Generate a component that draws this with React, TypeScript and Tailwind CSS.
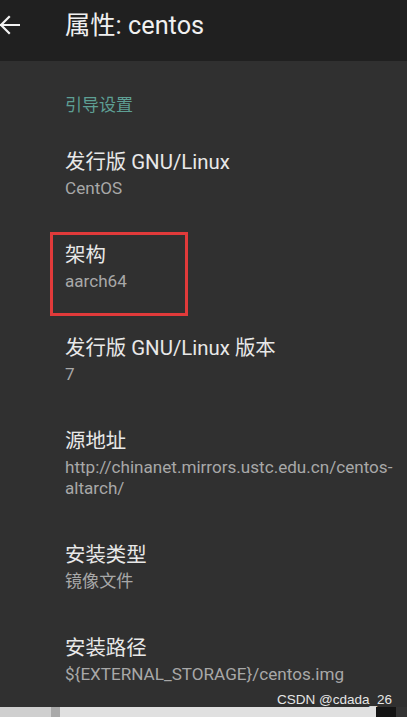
import React from "react";

const items: { title: string; lines: string[]; boxed?: boolean }[] = [
  { title: "发行版 GNU/Linux", lines: ["CentOS"] },
  { title: "架构", lines: ["aarch64"], boxed: true },
  { title: "发行版 GNU/Linux 版本", lines: ["7"] },
  { title: "源地址", lines: ["http://chinanet.mirrors.ustc.edu.cn/centos-", "altarch/"] },
  { title: "安装类型", lines: ["镜像文件"] },
  { title: "安装路径", lines: ["${EXTERNAL_STORAGE}/centos.img"] },
];

export default function App() {
  return (
    <div
      className="relative flex h-[717px] w-[407px] flex-col overflow-hidden bg-[#303030]"
      style={{ fontFamily: 'Roboto, "Noto Sans CJK SC", sans-serif' }}
    >
      <div className="flex h-[61px] shrink-0 items-start bg-[#202020]">
        <svg width="20" height="20" viewBox="0 0 20 20" className="mt-[15px] shrink-0">
          <path d="M1 10 H19 M1 10 L9 2 M1 10 L9 18" stroke="#f2f2f2" strokeWidth="2.2" fill="none" strokeLinecap="square" />
        </svg>
        <div className="ml-[45px] mt-[11px] text-[25.3px] leading-[30px] text-[#f0f0f0]">属性: centos</div>
      </div>
      <div className="flex-1 pl-[65px]">
        <div className="mt-[32px] mb-[10px] text-[17px] leading-[24px] text-[#5e9f94]">引导设置</div>
        {items.map((it) => (
          <div key={it.title} className="relative py-[21px]">
            <div className="whitespace-nowrap text-[20.4px] leading-[28px] text-[#e8e8e8]">{it.title}</div>
            <div className="mt-[2px]">
              {it.lines.map((l) => (
                <div key={l} className="whitespace-nowrap text-[17.1px] leading-[21px] text-[#a8a8a8]">{l}</div>
              ))}
            </div>
            {it.boxed && (
              <div className="absolute left-[-15px] top-[12px] h-[84px] w-[138px] border-[3px] border-[#e03a3a]" />
            )}
          </div>
        ))}
      </div>
      <div className="absolute bottom-[9px] right-[15px] text-[13.5px] leading-[16px] text-[#e6e6e6]" style={{ fontFamily: '"Liberation Sans", sans-serif' }}>
        CSDN @cdada_26
      </div>
      <div className="flex h-[10px] shrink-0">
        <div className="w-[51px] bg-[#cfcfcf]" />
        <div className="w-[9px] bg-[#a9a9a9]" />
        <div className="flex-1 bg-[#e0e0e0]" />
        <div className="w-[20px] bg-[#141414]" />
        <div className="w-[11px] bg-[#343434]" />
      </div>
    </div>
  );
}
